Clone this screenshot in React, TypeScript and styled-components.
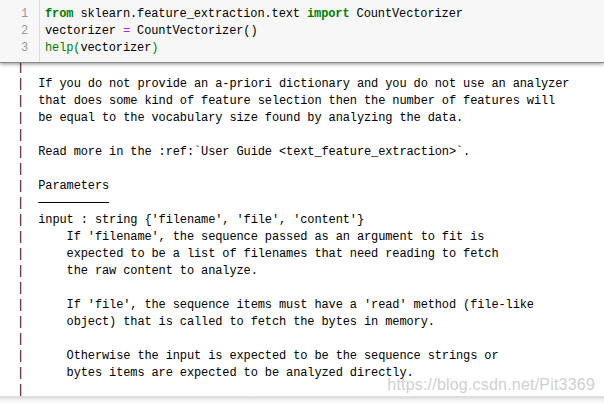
import React from 'react';
import styled, { createGlobalStyle } from 'styled-components';

const GlobalStyle = createGlobalStyle`
  html, body {
    margin: 0;
    padding: 0;
    background: #ffffff;
    overflow: hidden;
  }
`;

const mono = `"Liberation Mono", "DejaVu Sans Mono", monospace`;

const Page = styled.div`
  position: relative;
  width: 604px;
  height: 404px;
  overflow: hidden;
  background: #ffffff;
  display: flex;
  flex-direction: column;
`;

const CodeCell = styled.div`
  position: relative;
  z-index: 2;
  display: flex;
  height: 62px;
  flex-shrink: 0;
  background: #f7f7f7;
  border-bottom: 1px solid #8a8a8a;
  box-shadow: 0 1px 4px rgba(0, 0, 0, 0.45);
  font-family: ${mono};
  font-size: 12px;
  letter-spacing: -0.12px;
  line-height: 17px;
`;

const Gutter = styled.div`
  width: 28px;
  padding: 6px 11px 0 0;
  border-right: 1px solid #dddddd;
  text-align: right;
  color: #999999;
`;

const CodeLines = styled.div`
  padding: 6px 0 0 5px;
  white-space: pre;
  color: #000000;
`;

const Kw = styled.span`
  color: #008000;
  font-weight: bold;
`;

const Builtin = styled.span`
  color: #008000;
`;

const Op = styled.span`
  color: #aa22ff;
`;

const Output = styled.div`
  position: relative;
  z-index: 1;
  margin-top: -4px;
  padding-left: 17px;
  white-space: pre;
  font-family: ${mono};
  font-size: 12px;
  letter-spacing: -0.12px;
  line-height: 17px;
  color: #000000;
`;

const Rule = styled.span`
  color: transparent;
  text-decoration: line-through;
  text-decoration-color: #000000;
  text-decoration-thickness: 1px;
`;

const BottomBar = styled.div`
  position: absolute;
  left: 0;
  right: 0;
  bottom: 0;
  height: 7px;
  z-index: 3;
  background: linear-gradient(#d8d8d8, #f2f2f2 40%, #ffffff);
  border-top: 1px solid #e0e0e0;
`;

const Watermark = styled.div`
  position: absolute;
  right: 9px;
  bottom: 10px;
  z-index: 4;
  font-family: "Liberation Sans", Arial, sans-serif;
  font-size: 16px;
  color: rgba(190, 190, 190, 0.75);
  letter-spacing: 0.2px;
`;

const helpLines: string[] = [
  '|',
  '|  If you do not provide an a-priori dictionary and you do not use an analyzer',
  '|  that does some kind of feature selection then the number of features will',
  '|  be equal to the vocabulary size found by analyzing the data.',
  '|',
  '|  Read more in the :ref:`User Guide <text_feature_extraction>`.',
  '|',
  '|  Parameters',
  '__RULE__',
  '|  input : string {\'filename\', \'file\', \'content\'}',
  '|      If \'filename\', the sequence passed as an argument to fit is',
  '|      expected to be a list of filenames that need reading to fetch',
  '|      the raw content to analyze.',
  '|',
  '|      If \'file\', the sequence items must have a \'read\' method (file-like',
  '|      object) that is called to fetch the bytes in memory.',
  '|',
  '|      Otherwise the input is expected to be the sequence strings or',
  '|      bytes items are expected to be analyzed directly.',
  '|',
];

const App = () => {
  return (
    <Page>
      <GlobalStyle />
      <CodeCell>
        <Gutter>
          <div>1</div>
          <div>2</div>
          <div>3</div>
        </Gutter>
        <CodeLines>
          <div>
            <Kw>from</Kw> sklearn.feature_extraction.text <Kw>import</Kw> CountVectorizer
          </div>
          <div>
            vectorizer <Op>=</Op> CountVectorizer()
          </div>
          <div>
            <Builtin>help(</Builtin>vectorizer<Builtin>)</Builtin>
          </div>
        </CodeLines>
      </CodeCell>
      <Output>
        {helpLines.map((line, i) =>
          line === '__RULE__' ? (
            <div key={i}>
              {'|  '}
              <Rule>----------</Rule>
            </div>
          ) : (
            <div key={i}>{line}</div>
          )
        )}
      </Output>
      <Watermark>https://blog.csdn.net/Pit3369</Watermark>
      <BottomBar />
    </Page>
  );
};

export default App;
